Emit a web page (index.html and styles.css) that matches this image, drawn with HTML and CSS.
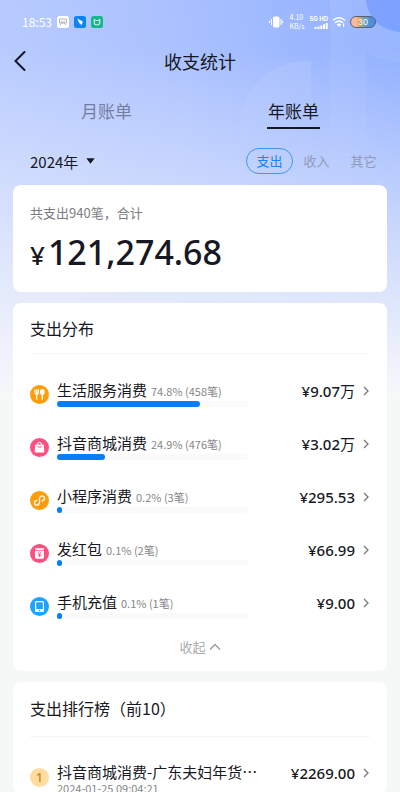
FILE: index.html
```html
<!DOCTYPE html>
<html lang="zh-CN">
<head>
<meta charset="utf-8">
<meta name="viewport" content="width=device-width, initial-scale=1">
<title>收支统计</title>
<link rel="stylesheet" href="styles.css">
</head>
<body>
<div class="screen">
  <svg class="backdrop" viewBox="0 0 400 400" preserveAspectRatio="xMaxYMin slice" aria-hidden="true">
    <defs>
      <linearGradient id="fade" x1="0" y1="0" x2="0" y2="1">
        <stop offset="0" stop-color="#fff" stop-opacity=".09"/>
        <stop offset="1" stop-color="#fff" stop-opacity="0"/>
      </linearGradient>
    </defs>
    <path d="M330 0h36c2 18 14 30 34 32v30c-12 0-24-4-34-10v140h-36z" fill="url(#fade)"/>
    <path d="M240 130c0-42 30-70 71-69v90h-71z" fill="url(#fade)"/>
    <path d="M366 0h34v32c-20-2-32-14-34-32z" fill="#5f8dff" fill-opacity=".4"/>
  </svg>

  <div class="status">
    <div class="status-side">
      <span class="clock">18:53</span>
      <svg class="app" viewBox="0 0 12 12"><rect width="12" height="12" rx="2.5" fill="#fff"/><path d="M2.500 3h7v4h-7zM3 9l2-2M9 9L7 7M4 5l2 1.500 2-1.500" fill="none" stroke="#a9adb8" stroke-width=".9"/></svg>
      <svg class="app" viewBox="0 0 12 12"><rect width="12" height="12" rx="2.500" fill="#0a85f2"/><path d="M3 2.500l4.500 2.200c1.400.7 1.400 1.600.8 2.500L6.800 10l.1-2-1.500-.4.3-.7L4 5.500l.7-.2z" fill="#fff"/></svg>
      <svg class="app" viewBox="0 0 12 12"><rect width="12" height="12" rx="2.500" fill="#17b88e"/><path d="M3.200 3.200v3.600q0 2 2 2h1.600q2 0 2-2V3.200L7.300 4.500H4.800z" fill="none" stroke="#fff" stroke-width=".9"/></svg>
    </div>
    <div class="status-side status-right">
      <svg class="vibrate" viewBox="0 0 14 12"><rect x="4" y=".5" width="6.500" height="11" rx="1.500" fill="#fff"/><path d="M2.500 3v6M12 3v6M.7 4.800v2.400M13.500 4.800v2.400" stroke="#fff" stroke-width="1"/></svg>
      <span class="speed">4.10<br>KB/s</span>
      <span class="net"><span>5G HD</span>
        <svg class="bars" viewBox="0 0 14 6"><path d="M.5 4h2v2h-2zM3.500 3.500h2V6h-2zM6.300 2.500h2V6h-2zM9 1.200h2V6H9zM11.700 0h2v6h-2z" fill="#fff"/></svg>
      </span>
      <svg class="wifi" viewBox="0 0 14 12"><path d="M1 4.300q6-5.200 12 0M3 6.800q4-3.400 8 0" fill="none" stroke="#fff" stroke-width="1.500"/><path d="M4.700 8.500q2.300-2 4.600 0L7 11zM11 7.500h1.200V11H11z" fill="#fff"/></svg>
      <span class="battery">30</span>
    </div>
  </div>

  <header class="title-bar">
    <button class="back" type="button" aria-label="返回"><svg viewBox="0 0 12 20"><path d="M10.500 1L1.500 10l9 9" fill="none" stroke="#161823" stroke-width="2" stroke-linecap="round"/></svg></button>
    <h1>收支统计</h1>
  </header>

  <nav class="tabs">
    <button type="button">月账单</button>
    <button type="button" class="active">年账单</button>
  </nav>

  <div class="filters">
    <button class="year" type="button">2024年<svg viewBox="0 0 9 6"><path d="M.3.3h8.400L4.500 5.700z" fill="#161823"/></svg></button>
    <div class="kinds">
      <button type="button" class="on">支出</button>
      <button type="button">收入</button>
      <button type="button">其它</button>
    </div>
  </div>

  <main class="cards">
    <section class="card summary">
      <p class="caption">共支出940笔，合计</p>
      <p class="total"><span class="yen">¥</span>121,274.68</p>
    </section>

    <section class="card">
      <h2 class="head">支出分布</h2>
      <ul class="list">
        <li class="row">
          <svg class="icon" viewBox="0 0 19 19"><circle cx="9.500" cy="9.500" r="9.500" fill="#ff9c0a"/><path d="M5 4.300v3.500q0 1.500 1.700 1.500t1.700-1.500V4.300M6.700 4.300v10.200" fill="none" stroke="#fff" stroke-width="1.200"/><ellipse cx="12.300" cy="7" rx="2.400" ry="2.900" fill="#fff"/><path d="M12.300 9v5.500" stroke="#fff" stroke-width="1.400"/></svg>
          <div class="info"><p class="name">生活服务消费<small>74.8% (458笔)</small></p><div class="track"><div class="fill" style="width:75%"></div></div></div>
          <a class="money" href="#"><span>¥9.07<span class="unit">万</span></span><svg viewBox="0 0 6 10"><path d="M1 1l4 4-4 4"/></svg></a>
        </li>
        <li class="row">
          <svg class="icon" viewBox="0 0 19 19"><circle cx="9.500" cy="9.500" r="9.500" fill="#ff4e80"/><path d="M6 6.500h7q.8 0 .9.800l.4 6q0 1.200-1.200 1.200H5.900q-1.200 0-1.200-1.200l.4-6q.1-.8.900-.8z" fill="#fff"/><path d="M7.500 6.500q0-2.300 2-2.300t2 2.300" fill="none" stroke="#fff" stroke-width="1"/><path d="M7.800 8q0 1.500 1.700 1.500t1.700-1.500" fill="none" stroke="#ff4e80" stroke-width=".9"/></svg>
          <div class="info"><p class="name">抖音商城消费<small>24.9% (476笔)</small></p><div class="track"><div class="fill" style="width:25%"></div></div></div>
          <a class="money" href="#"><span>¥3.02<span class="unit">万</span></span><svg viewBox="0 0 6 10"><path d="M1 1l4 4-4 4"/></svg></a>
        </li>
        <li class="row">
          <svg class="icon" viewBox="0 0 19 19"><circle cx="9.500" cy="9.500" r="9.500" fill="#ff9c0a"/><path d="M6.800 9.300c-3 .4-3.100 5 0 4.900 1.800-.1 2.700-1.200 2.700-2.900V7.600c0-1.600 1-2.700 2.500-2.700 3.300 0 3.200 4.500.2 4.900" fill="none" stroke="#fff" stroke-width="1.300" stroke-linecap="round"/></svg>
          <div class="info"><p class="name">小程序消费<small>0.2% (3笔)</small></p><div class="track"><div class="fill" style="width:0.2%"></div></div></div>
          <a class="money" href="#">¥295.53<svg viewBox="0 0 6 10"><path d="M1 1l4 4-4 4"/></svg></a>
        </li>
        <li class="row">
          <svg class="icon" viewBox="0 0 19 19"><circle cx="9.500" cy="9.500" r="9.500" fill="#ff4e80"/><path d="M5 4.200h9v1.100q-4.500 2.400-9 0zM5 6.300q4.500 2.200 9 0v7q0 1.400-1.400 1.400H6.400Q5 14.700 5 13.300z" fill="#fff"/><path d="M7.700 7.800l1.800 2 1.800-2M9.500 9.800v3.400M7.800 10.200h3.400M7.800 11.700h3.400" fill="none" stroke="#ff4e80" stroke-width=".8"/></svg>
          <div class="info"><p class="name">发红包<small>0.1% (2笔)</small></p><div class="track"><div class="fill" style="width:0.1%"></div></div></div>
          <a class="money" href="#">¥66.99<svg viewBox="0 0 6 10"><path d="M1 1l4 4-4 4"/></svg></a>
        </li>
        <li class="row">
          <svg class="icon" viewBox="0 0 19 19"><circle cx="9.500" cy="9.500" r="9.500" fill="#1ea4fb"/><rect x="5" y="4" width="9" height="11" rx="1.500" fill="#fff"/><rect x="6.200" y="5.300" width="6.600" height="6.700" fill="#1ea4fb"/><circle cx="9.500" cy="13.500" r=".7" fill="#1ea4fb"/></svg>
          <div class="info"><p class="name">手机充值<small>0.1% (1笔)</small></p><div class="track"><div class="fill" style="width:0.1%"></div></div></div>
          <a class="money" href="#">¥9.00<svg viewBox="0 0 6 10"><path d="M1 1l4 4-4 4"/></svg></a>
        </li>
      </ul>
      <button class="collapse" type="button">收起<svg viewBox="0 0 12 8"><path d="M1 6.500l5-5 5 5"/></svg></button>
    </section>

    <section class="card ranking">
      <h2 class="head">支出排行榜（前10）</h2>
      <ol class="list">
        <li class="row">
          <span class="rank">1</span>
          <div class="info"><p class="name">抖音商城消费-广东夫妇年货…</p><time class="date">2024-01-25 09:04:21</time></div>
          <a class="money" href="#">¥2269.00<svg viewBox="0 0 6 10"><path d="M1 1l4 4-4 4"/></svg></a>
        </li>
      </ol>
    </section>
  </main>
</div>
</body>
</html>
```
FILE: styles.css
```css
* { box-sizing: border-box; }

body, h1, h2, p, ul, ol { margin: 0; padding: 0; }

body {
  font-family: "Noto Sans CJK SC", "Noto Sans", sans-serif;
  color: #161823;
  background: #f6f8f8;
}

button {
  padding: 0;
  border: 0;
  background: none;
  color: inherit;
  font: inherit;
}

svg { display: block; flex: none; }

.screen {
  position: relative;
  height: 100vh;
  overflow: hidden auto;
  scrollbar-width: none;
  background:
    linear-gradient(180deg, rgba(244, 245, 251, 0) 0, rgba(244, 245, 251, 0) 50px, #f4f5fb 380px, #f6f8f8 400px),
    linear-gradient(75deg, #bed0ff 0, #adc3ff 50%, #8fafff 100%) 0 0 / 100% 400px no-repeat;
}

.backdrop {
  position: absolute;
  top: 0;
  right: 0;
  width: 100%;
  height: 400px;
}

.status, .title-bar, .tabs, .filters, .cards { position: relative; }

.status {
  display: flex;
  justify-content: space-between;
  align-items: center;
  height: 44px;
  padding: 0 24px 0 22px;
  color: #fff;
}

.status-side { display: flex; align-items: center; gap: 5px; }
.status-right { gap: 4px; }
.clock { font-size: 12px; line-height: 16px; }
.app { width: 12px; height: 12px; }
.vibrate { width: 14px; height: 12px; margin-right: 2px; }
.speed { width: 14px; font-size: 7px; line-height: 9px; text-align: center; white-space: nowrap; }
.net {
  display: flex;
  flex-direction: column;
  align-items: flex-end;
  gap: 1px;
  margin-left: 2px;
  font: 700 6px/6px "Inter", sans-serif;
  white-space: nowrap;
}
.bars { width: 14px; height: 6px; }
.wifi { width: 14px; height: 12px; }
.battery {
  width: 26px;
  height: 12px;
  border: 1px solid #586173;
  border-radius: 6px;
  background: linear-gradient(90deg, #ffb898 0 24%, #dda84e 32%, #6fa2bd 55%, #4e8edb 80%);
  font: 8px/10px "Inter", sans-serif;
  text-align: center;
}

.title-bar {
  display: flex;
  align-items: center;
  justify-content: center;
  height: 34px;
}

.title-bar h1 { font-size: 18px; line-height: 26px; font-weight: 400; }
.back { position: absolute; left: 14px; }
.back svg { width: 12px; height: 20px; }

.tabs {
  display: grid;
  grid-template-columns: 1fr 1fr;
  justify-items: center;
  padding: 20px 13px 0;
}

.tabs button {
  padding: 0 1px 3px;
  border-bottom: 2px solid transparent;
  font-size: 17px;
  line-height: 26px;
  color: #737d9d;
}

.tabs .active { border-color: #161823; color: #161823; }

.filters {
  display: flex;
  align-items: center;
  justify-content: space-between;
  height: 56px;
  padding: 8px 13px 0 30px;
}

.year { display: flex; align-items: center; gap: 8px; font-size: 15px; }
.year svg { width: 9px; height: 6px; }
.kinds { display: flex; }

.kinds button {
  width: 47px;
  height: 26px;
  border: 1px solid transparent;
  border-radius: 13px;
  font-size: 13px;
  line-height: 24px;
  color: #919abb;
}

.kinds .on { border-color: #3d97f5; color: #1685f5; }

.cards {
  display: flex;
  flex-direction: column;
  gap: 11px;
  padding: 0 13px;
}

.card { padding: 0 17px; border-radius: 8px; background: #fff; }
.summary { padding: 18px 17px 15px; }
.caption { font-size: 13px; line-height: 20px; color: #7b7c81; }
.total { margin-top: 4px; font: 500 34px/50px "Noto Sans", sans-serif; }
.yen { margin-right: 3px; font-size: 26px; line-height: 1; }

.head {
  padding: 13px 0;
  border-bottom: 1px solid #f5f5f6;
  font-size: 16px;
  line-height: 24px;
  font-weight: 400;
}

.ranking .head { padding: 14px 0 16px; }

.list {
  display: flex;
  flex-direction: column;
  gap: 26px;
  padding-top: 26px;
  list-style: none;
}

.ranking .list { padding-top: 25px; }

.row { display: flex; align-items: flex-start; }
.icon { width: 19px; height: 19px; margin: 5px 8px 0 0; }
.info { flex: 1; min-width: 0; }

.name {
  font-size: 15px;
  line-height: 20px;
  white-space: nowrap;
}

.name small { margin-left: 4px; font-size: 11px; line-height: 1; color: #85868a; }

.track {
  width: 70%;
  min-width: 191px;
  height: 6px;
  margin-top: 1px;
  border-radius: 3px;
  background: #fafafa;
}

.fill { min-width: 5px; height: 6px; border-radius: 3px; background: #077df8; }

.money {
  display: flex;
  align-items: center;
  gap: 8px;
  margin-right: 1px;
  font: 500 15px/22px "Noto Sans", "Noto Sans CJK SC", sans-serif;
  color: #161823;
  text-decoration: none;
}

.money .unit { font-weight: 400; line-height: 1; }
.money svg { width: 6px; height: 10px; fill: none; stroke: #77787c; stroke-width: 1.3; }

.collapse {
  display: flex;
  align-items: center;
  gap: 3px;
  margin: 18px auto 0;
  padding-bottom: 14px;
  font-size: 13px;
  line-height: 20px;
  color: #aaabae;
}

.collapse svg { width: 12px; height: 8px; fill: none; stroke: #999a9e; stroke-width: 1.3; }

.rank {
  width: 19px;
  height: 19px;
  margin: 6px 8px 0 0;
  border-radius: 50%;
  background: #ffdca0;
  font: 500 13px/19px "Noto Sans", sans-serif;
  text-align: center;
  color: #c88318;
}

.date { display: block; font-size: 11px; line-height: 12px; color: #85868a; }
```
